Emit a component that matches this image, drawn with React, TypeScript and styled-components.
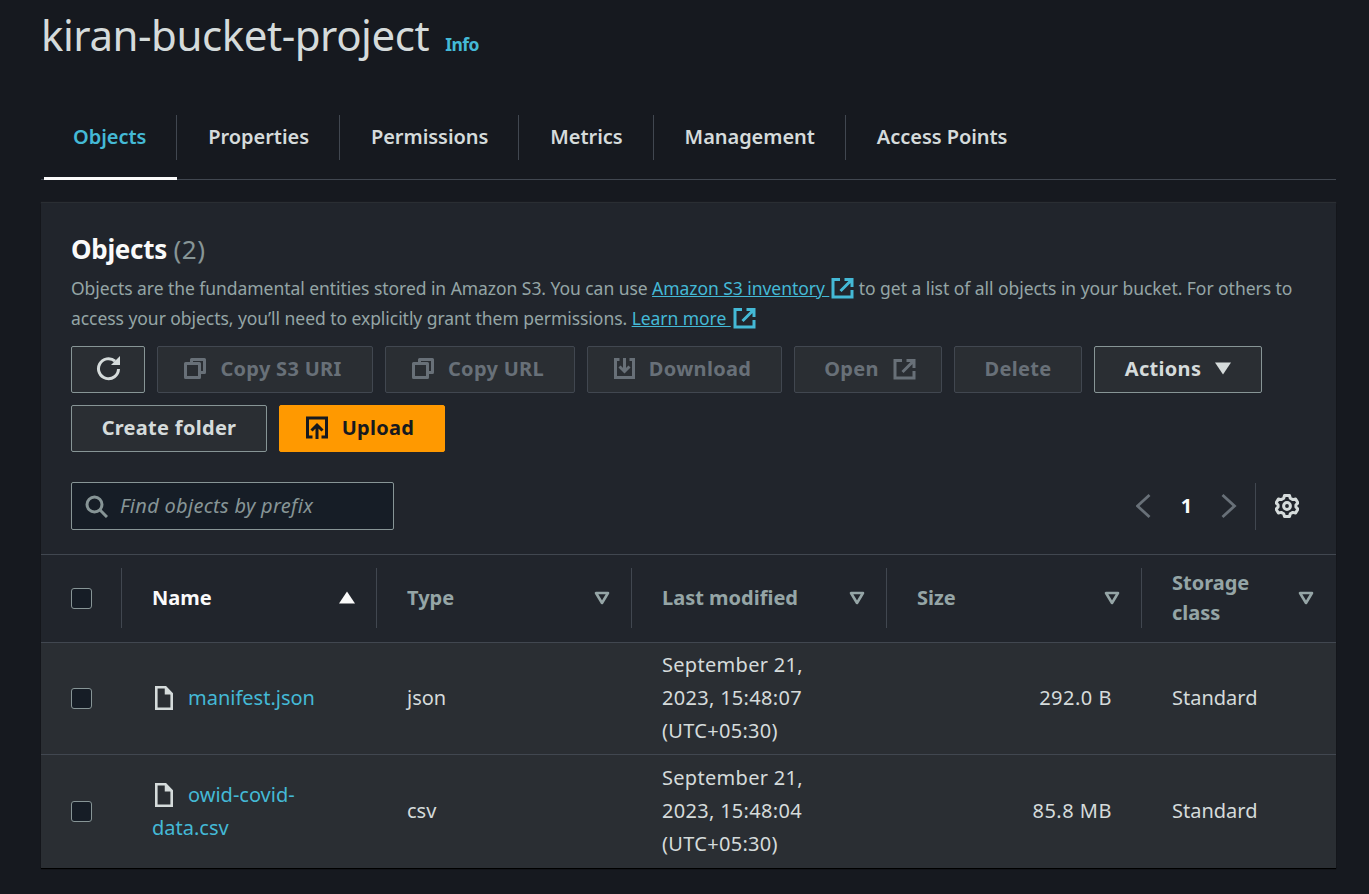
import styled, { createGlobalStyle } from "styled-components";

const GlobalStyle = createGlobalStyle`
  html, body {
    margin: 0;
    padding: 0;
    background: #16191f;
    color: #d5dbdb;
    font-family: "Noto Sans", "Liberation Sans", sans-serif;
    font-size: 17.5px;
    line-height: 30px;
  }
  * { box-sizing: border-box; }
`;

const Page = styled.div`
  width: 1369px;
  height: 894px;
  padding: 0 33px 0 41px;
  overflow: hidden;
`;

const TitleRow = styled.div`
  display: flex;
  align-items: baseline;
  gap: 16px;
  height: 115px;
  padding-top: 8px;
`;

const Title = styled.h1`
  margin: 0;
  font-size: 42px;
  line-height: 54px;
  font-weight: 400;
  letter-spacing: -0.45px;
  color: #d5dbdb;
`;

const InfoLink = styled.a`
  font-size: 17.5px;
  font-weight: 700;
  letter-spacing: -0.5px;
  color: #44b9d6;
`;

const Tabs = styled.nav`
  display: flex;
  height: 65px;
  padding-left: 3px;
  border-bottom: 1px solid #414750;
`;

const Tab = styled.div<{ $active?: boolean }>`
  height: 65px;
  padding: 7px 31px 0;
  position: relative;
  font-size: 20px;
  font-weight: 600;
  letter-spacing: -0.05px;
  color: ${(p) => (p.$active ? "#44b9d6" : "#d5dbdb")};
  border-bottom: 3px solid ${(p) => (p.$active ? "#fafafa" : "transparent")};
  &:first-child {
    padding-left: 29px;
    padding-right: 31px;
  }
  &:not(:last-child)::after {
    content: "";
    position: absolute;
    right: 0;
    top: 0;
    height: 45px;
    width: 1px;
    background: #414750;
  }
`;

const Panel = styled.section`
  margin-top: 23px;
  height: 665px;
  background: #21252c;
  box-shadow: 0 1px 1px #000, 0 -1px 1px #2a2e33;
`;

const PanelHead = styled.div`
  padding: 27px 30px 0;
  height: 351px;
`;

const Heading = styled.h2`
  margin: 0;
  font-size: 26px;
  line-height: 38px;
  font-weight: 700;
  color: #fafafa;
  letter-spacing: -0.3px;
  span {
    font-weight: 400;
    letter-spacing: 0.6px;
    color: #879596;
  }
`;

const Description = styled.p`
  margin: 5px 0 0;
  color: #95a5a6;
  letter-spacing: -0.05px;
  max-width: 1240px;
`;

const DocLink = styled.a`
  color: #44b9d6;
  text-decoration: underline;
  svg {
    display: inline-block;
    vertical-align: -4px;
    margin-left: 2px;
  }
`;

const ButtonRows = styled.div`
  margin-top: 13px;
  display: flex;
  flex-direction: column;
  gap: 12px;
`;

const Row = styled.div`
  display: flex;
  gap: 12px;
`;

type Kind = "normal" | "disabled" | "primary";

const Button = styled.button<{ $width: number; $kind?: Kind; $nudge?: "left" | "right" }>`
  width: ${(p) => p.$width}px;
  height: 47px;
  display: flex;
  align-items: center;
  justify-content: center;
  gap: 14px;
  padding: 0 ${(p) => (p.$nudge === "left" ? "4px" : "0")} 2px ${(p) => (p.$nudge === "right" ? "4px" : "0")};
  border-radius: 2px;
  font-family: inherit;
  font-size: 20px;
  font-weight: 700;
  letter-spacing: 0.3px;
  border: 1px solid
    ${(p) =>
      p.$kind === "disabled" ? "#414750" : p.$kind === "primary" ? "#ff9900" : "#879596"};
  background: ${(p) => (p.$kind === "primary" ? "#ff9900" : "#2a2e33")};
  color: ${(p) =>
    p.$kind === "disabled" ? "#687078" : p.$kind === "primary" ? "#16191f" : "#d5dbdb"};
`;

const ToolRow = styled.div`
  display: flex;
  justify-content: space-between;
  align-items: center;
  margin-top: 30px;
`;

const Search = styled.div`
  width: 323px;
  height: 48px;
  display: flex;
  align-items: center;
  gap: 12px;
  padding-left: 13px;
  background: #161d26;
  border: 1px solid #879596;
  border-radius: 2px;
  font-size: 20px;
  letter-spacing: 0.3px;
  font-style: italic;
  color: #879596;
`;

const Pager = styled.div`
  display: flex;
  align-items: center;
  height: 47px;
  color: #687078;
  margin-right: 7px;
`;

const PageNumber = styled.span`
  width: 69px;
  text-align: center;
  font-size: 20px;
  font-weight: 700;
  color: #fafafa;
`;

const PagerSettings = styled.div`
  display: flex;
  align-items: center;
  height: 47px;
  margin-left: 18px;
  padding-left: 19px;
  border-left: 1px solid #414750;
  color: #d5dbdb;
`;

const GridRow = styled.div`
  display: grid;
  grid-template-columns: 81px 255px 255px 255px 255px 194px;
  border-top: 1px solid #414750;
`;

const HeadRow = styled(GridRow)`
  height: 88px;
`;

const HeadCell = styled.div<{ $active?: boolean }>`
  position: relative;
  display: flex;
  align-items: center;
  justify-content: space-between;
  padding: 0 22px 2px 30px;
  font-size: 20px;
  font-weight: 700;
  color: ${(p) => (p.$active ? "#fafafa" : "#95a5a6")};
  &:not(:last-child)::after {
    content: "";
    position: absolute;
    right: 0;
    top: 13px;
    height: 60px;
    width: 1px;
    background: #414750;
  }
`;

const CheckCell = styled.div`
  position: relative;
  display: flex;
  align-items: center;
  padding-left: 30px;
`;

const HeadCheck = styled(CheckCell)`
  &::after {
    content: "";
    position: absolute;
    right: 0;
    top: 13px;
    height: 60px;
    width: 1px;
    background: #414750;
  }
`;

const Checkbox = styled.span`
  width: 21px;
  height: 21px;
  background: #161d26;
  border: 1px solid #879596;
  border-radius: 3px;
`;

const BodyRow = styled(GridRow)<{ $height: number }>`
  height: ${(p) => p.$height}px;
  background: #2a2e33;
  font-size: 20px;
  line-height: 33px;
`;

const Cell = styled.div<{ $right?: boolean }>`
  display: flex;
  align-items: center;
  padding: 0 30px 2px;
  letter-spacing: ${(p) => (p.$right ? "0.5px" : "0")};
  justify-content: ${(p) => (p.$right ? "flex-end" : "flex-start")};
`;

const DateText = styled.span`
  max-width: 170px;
  letter-spacing: 0.3px;
`;

const FileName = styled.div`
  color: #44b9d6;
  svg {
    display: inline-block;
    vertical-align: -5px;
    margin: 0 15px 0 3px;
  }
`;

const Arrow = styled.svg`
  flex: none;
`;

const ExternalIcon = () => (
  <svg width="23" height="22" viewBox="0 0 23 22" fill="none" stroke="currentColor" strokeWidth="3">
    <path d="M9 2.500H2v17.500h19V13" />
    <path d="M13.500 2.500h7.500V10M21 2.500 9.500 14" />
  </svg>
);

const CopyIcon = () => (
  <svg width="22" height="21" viewBox="0 0 22 21" fill="none" stroke="currentColor" strokeWidth="3" strokeLinejoin="round">
    <path d="M7.500 5V1.500h13v13h-5" />
    <rect x="1.500" y="5.500" width="14" height="14" />
  </svg>
);

const RefreshIcon = () => (
  <svg width="25" height="25" viewBox="0 0 25 25" fill="none" stroke="currentColor" strokeWidth="3">
    <path d="M22.500 13a10 10 0 1 1-3.400-7.800" />
    <path d="M24 0v9h-9z" fill="currentColor" stroke="none" />
  </svg>
);

const DownloadIcon = () => (
  <svg width="21" height="21" viewBox="0 0 21 21" fill="none" stroke="currentColor" strokeWidth="3">
    <path d="M5.500 1.500h-4v18h18v-18h-4" />
    <path d="M10.500 0v13M5.500 8.500l5 5 5-5" />
  </svg>
);

const UploadIcon = () => (
  <svg width="22" height="23" viewBox="0 0 22 23" fill="none" stroke="currentColor" strokeWidth="3">
    <path d="M6.500 21H1.500V2h19v19h-5" />
    <path d="M11 23V9.500M5.500 14.500l5.500-5.500 5.500 5.500" />
  </svg>
);

const SearchIcon = () => (
  <svg width="23" height="23" viewBox="0 0 23 23" fill="none" stroke="currentColor" strokeWidth="3">
    <circle cx="9.500" cy="9.500" r="7.500" />
    <path d="m15 15 7 7" />
  </svg>
);

const ChevronIcon = ({ flip }: { flip?: boolean }) => (
  <svg width="16" height="26" viewBox="0 0 16 26" fill="none" stroke="currentColor" strokeWidth="2.800">
    <path d={flip ? "M1.500 2l12 11-12 11" : "M13.500 2 1.500 13l12 11"} />
  </svg>
);

const GearIcon = () => (
  <svg width="24" height="24" viewBox="0 0 24 24" fill="none" stroke="currentColor" strokeWidth="3" strokeLinejoin="round">
    <path d="M9.500 1.500h5l.8 2.700 2.500 1.400 2.800-.7 2.300 4-2 2.100v2l2 2.100-2.300 4-2.800-.7-2.500 1.400-.8 2.700h-5l-.8-2.700-2.500-1.400-2.800.7-2.300-4 2-2.100v-2l-2-2.100 2.300-4 2.800.7 2.500-1.400z" />
    <circle cx="12" cy="12" r="3.400" />
  </svg>
);

const SortDown = () => (
  <Arrow width="16" height="14" viewBox="0 0 16 14" fill="none" stroke="#95a5a6" strokeWidth="2.600" strokeLinejoin="round">
    <path d="M2 2h12l-6 10z" />
  </Arrow>
);

const SortUp = () => (
  <Arrow width="16" height="13" viewBox="0 0 16 13" fill="#fafafa">
    <path d="M8 .5 16 12.500H0z" />
  </Arrow>
);

const CaretDown = () => (
  <Arrow width="16" height="13" viewBox="0 0 16 13" fill="currentColor">
    <path d="M0 .5h16l-8 12z" />
  </Arrow>
);

const FileIcon = () => (
  <svg width="18" height="24" viewBox="0 0 18 24" fill="none" stroke="#d5dbdb" strokeWidth="2.600">
    <path d="M1.300 1.300h9.200l6.200 6.500v14.900H1.300z" />
    <path d="M10.500 1.300v6.500h6.200" fill="#d5dbdb" strokeWidth="1.500" />
  </svg>
);

const rows = [
  { name: "manifest.json", type: "json", date: "15:48:07", size: "292.0 B", height: 112 },
  { name: "owid-covid-data.csv", type: "csv", date: "15:48:04", size: "85.8 MB", height: 114 },
];

const App = () => {
  return (
    <Page>
      <GlobalStyle />
      <TitleRow>
        <Title>kiran-bucket-project</Title>
        <InfoLink>Info</InfoLink>
      </TitleRow>
      <Tabs>
        <Tab $active>Objects</Tab>
        <Tab>Properties</Tab>
        <Tab>Permissions</Tab>
        <Tab>Metrics</Tab>
        <Tab>Management</Tab>
        <Tab>Access Points</Tab>
      </Tabs>
      <Panel>
        <PanelHead>
          <Heading>
            Objects <span>(2)</span>
          </Heading>
          <Description>
            Objects are the fundamental entities stored in Amazon S3. You can use{" "}
            <DocLink>
              Amazon S3 inventory <ExternalIcon />
            </DocLink>{" "}
            to get a list of all objects in your bucket. For others to access your objects, you’ll
            need to explicitly grant them permissions.{" "}
            <DocLink>
              Learn more <ExternalIcon />
            </DocLink>
          </Description>
          <ButtonRows>
            <Row>
              <Button $width={74} aria-label="Refresh">
                <RefreshIcon />
              </Button>
              <Button $width={216} $kind="disabled" $nudge="left">
                <CopyIcon /> Copy S3 URI
              </Button>
              <Button $width={190} $kind="disabled" $nudge="left">
                <CopyIcon /> Copy URL
              </Button>
              <Button $width={195} $kind="disabled" $nudge="left">
                <DownloadIcon /> Download
              </Button>
              <Button $width={148} $kind="disabled" $nudge="right">
                Open <ExternalIcon />
              </Button>
              <Button $width={128} $kind="disabled">
                Delete
              </Button>
              <Button $width={168}>
                Actions <CaretDown />
              </Button>
            </Row>
            <Row>
              <Button $width={196}>Create folder</Button>
              <Button $width={166} $kind="primary" $nudge="left">
                <UploadIcon /> Upload
              </Button>
            </Row>
          </ButtonRows>
          <ToolRow>
            <Search>
              <SearchIcon />
              Find objects by prefix
            </Search>
            <Pager>
              <ChevronIcon />
              <PageNumber>1</PageNumber>
              <ChevronIcon flip />
              <PagerSettings>
                <GearIcon />
              </PagerSettings>
            </Pager>
          </ToolRow>
        </PanelHead>
        <HeadRow>
          <HeadCheck>
            <Checkbox />
          </HeadCheck>
          <HeadCell $active>
            Name <SortUp />
          </HeadCell>
          <HeadCell>
            Type <SortDown />
          </HeadCell>
          <HeadCell>
            Last modified <SortDown />
          </HeadCell>
          <HeadCell>
            Size <SortDown />
          </HeadCell>
          <HeadCell>
            <span>
              Storage
              <br />
              class
            </span>
            <SortDown />
          </HeadCell>
        </HeadRow>
        {rows.map((row) => (
          <BodyRow key={row.name} $height={row.height}>
            <CheckCell>
              <Checkbox />
            </CheckCell>
            <Cell>
              <FileName>
                <FileIcon />
                {row.name}
              </FileName>
            </Cell>
            <Cell>{row.type}</Cell>
            <Cell>
              <DateText>September 21, 2023, {row.date} (UTC+05:30)</DateText>
            </Cell>
            <Cell $right>{row.size}</Cell>
            <Cell>Standard</Cell>
          </BodyRow>
        ))}
      </Panel>
    </Page>
  );
};

export default App;
